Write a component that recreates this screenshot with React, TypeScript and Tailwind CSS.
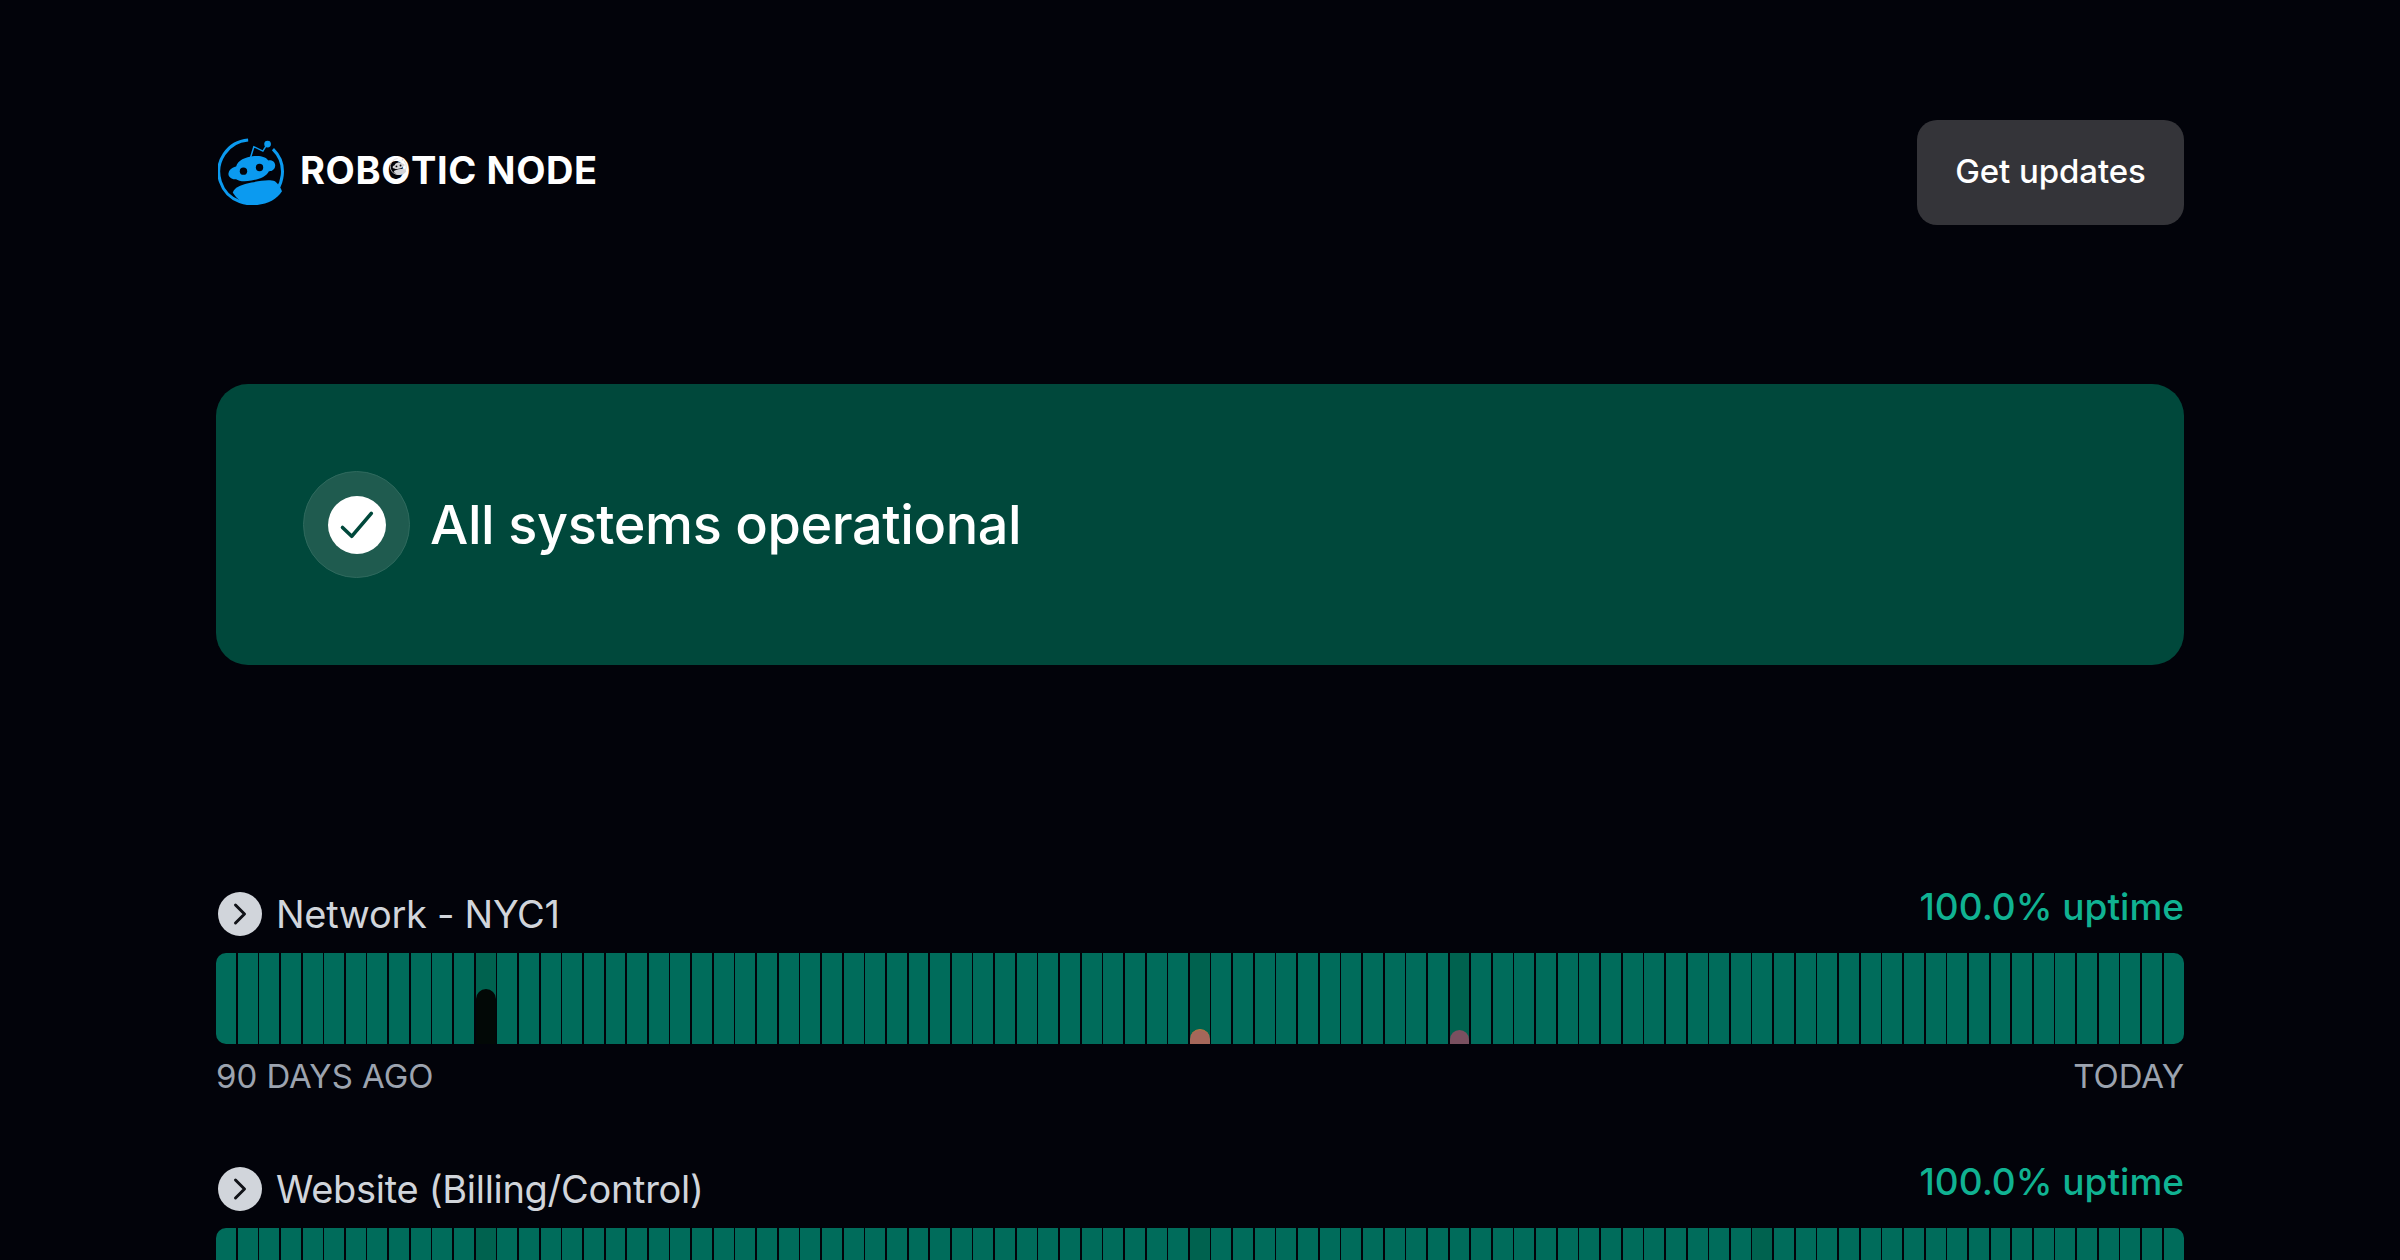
import React from 'react';
import { ChevronRight } from 'lucide-react';

const BAR_COUNT = 91;

type Mark = { h?: string; color?: string };

function RobotLogo({ className, color = '#0b9af0', eye = '#02030a' }: { className: string; color?: string; eye?: string }) {
  return (
    <svg viewBox="22 27 200 200" className={className} fill={color}>
      <path d="M186 60 A95 95 0 1 1 112 33" fill="none" stroke={color} strokeWidth="9" />
      <path d="M119 86 L129 53 L156 66 L166 50" fill="none" stroke={color} strokeWidth="4.5" />
      <circle cx="170" cy="45" r="10" />
      <path d="M76 112 C82 94 102 84 130 81 C150 79 166 84 172 94 C184 92 196 100 192 114 C188 124 180 126 174 126 C166 142 146 150 122 154 C100 158 84 156 76 150 C60 152 50 140 54 130 C56 120 68 114 76 112 Z" />
      <circle cx="98" cy="126" r="11" fill={eye} />
      <circle cx="146" cy="115" r="11" fill={eye} />
      <path d="M66 190 C72 172 96 166 122 160 C150 154 176 150 192 156 C202 164 210 176 213 186 C196 214 160 228 122 228 C100 228 80 212 66 190 Z" />
    </svg>
  );
}

function UptimeBars({ marks }: { marks: Record<number, Mark> }) {
  return (
    <div className="flex gap-[1.7px] h-[91px]">
      {Array.from({ length: BAR_COUNT }, (_, i) => {
        const mark = marks[i];
        const first = i === 0;
        const last = i === BAR_COUNT - 1;
        return (
          <div
            key={i}
            className={`relative flex-1 ${mark ? 'bg-[#00624f]' : 'bg-[#006c5b]'} ${first ? 'rounded-l-[10px]' : ''} ${last ? 'rounded-r-[10px]' : ''}`}
          >
            {mark?.h && <div className={`absolute bottom-0 left-0 right-0 rounded-t-[12px] ${mark.h} ${mark.color}`} />}
          </div>
        );
      })}
    </div>
  );
}

function ServiceRow({ name, marks, footer }: { name: string; marks: Record<number, Mark>; footer?: boolean }) {
  return (
    <div>
      <div className="flex items-center justify-between h-[60px] mb-[9px]">
        <div className="flex items-center gap-[14px] pl-[2px]">
          <div className="flex items-center justify-center w-[44px] h-[44px] rounded-full bg-[#d1d5db]">
            <ChevronRight className="w-[36px] h-[36px] text-[#111318]" strokeWidth={2} />
          </div>
          <span className="text-[38px] tracking-[-0.3px] text-[#d1d5db]">{name}</span>
        </div>
        <span className="text-[37px] font-medium text-[#10b292] pb-[14px]">100.0% uptime</span>
      </div>
      <UptimeBars marks={marks} />
      {footer && (
        <div className="flex justify-between mt-[12px] text-[33px] tracking-[-0.05px] leading-[40px] text-[#9ca3af]">
          <span>90 DAYS AGO</span>
          <span>TODAY</span>
        </div>
      )}
    </div>
  );
}

export default function App() {
  return (
    <div className="h-screen overflow-hidden bg-[#02030a] px-[216px] pt-[120px] font-['Inter',sans-serif] text-white">
      <header className="flex items-center justify-between">
        <div className="flex items-center gap-[15px] pb-[2px] pl-[2px]">
          <RobotLogo className="w-[67px] h-[67px]" />
          <span className="text-[38px] font-bold tracking-[0.6px] text-white pb-[3px]">
            ROB
            <span className="relative">
              O
              <RobotLogo className="absolute left-[9px] top-[11px] w-[17px] h-[17px]" color="#d4d4d8" eye="#02030a" />
            </span>
            TIC NODE
          </span>
        </div>
        <button className="h-[105px] w-[267px] rounded-[20px] bg-[#343439] text-[33px] font-medium tracking-[-0.1px] text-white pb-[2px]">
          Get updates
        </button>
      </header>

      <section className="mt-[159px] flex items-center h-[281px] rounded-[32px] bg-[#00483b] pl-[87px]">
        <div className="flex items-center justify-center w-[107px] h-[107px] rounded-full bg-[#1f5b4f] border border-[#2f6a5e]">
          <svg viewBox="0 0 58 58" className="w-[58px] h-[58px]">
            <circle cx="29" cy="29" r="29" fill="#fff" />
            <path d="M14.5 31.5 L23.7 40.3 L43.3 17.3" fill="none" stroke="#00483b" strokeWidth="3.6" strokeLinecap="round" strokeLinejoin="round" />
          </svg>
        </div>
        <h1 className="ml-[20px] text-[54px] font-medium tracking-[-0.4px]">All systems operational</h1>
      </section>

      <main className="mt-[219px] flex flex-col gap-[63px]">
        <ServiceRow
          name="Network - NYC1"
          footer
          marks={{
            12: { h: 'h-[55px]', color: 'bg-[#020806]' },
            45: { h: 'h-[15px]', color: 'bg-[#a5675a] border-t border-[#b5793f]' },
            57: { h: 'h-[14px]', color: 'bg-[#7a5060]' },
          }}
        />
        <ServiceRow name="Website (Billing/Control)" marks={{ 12: {}, 45: {}, 71: {} }} />
      </main>
    </div>
  );
}
